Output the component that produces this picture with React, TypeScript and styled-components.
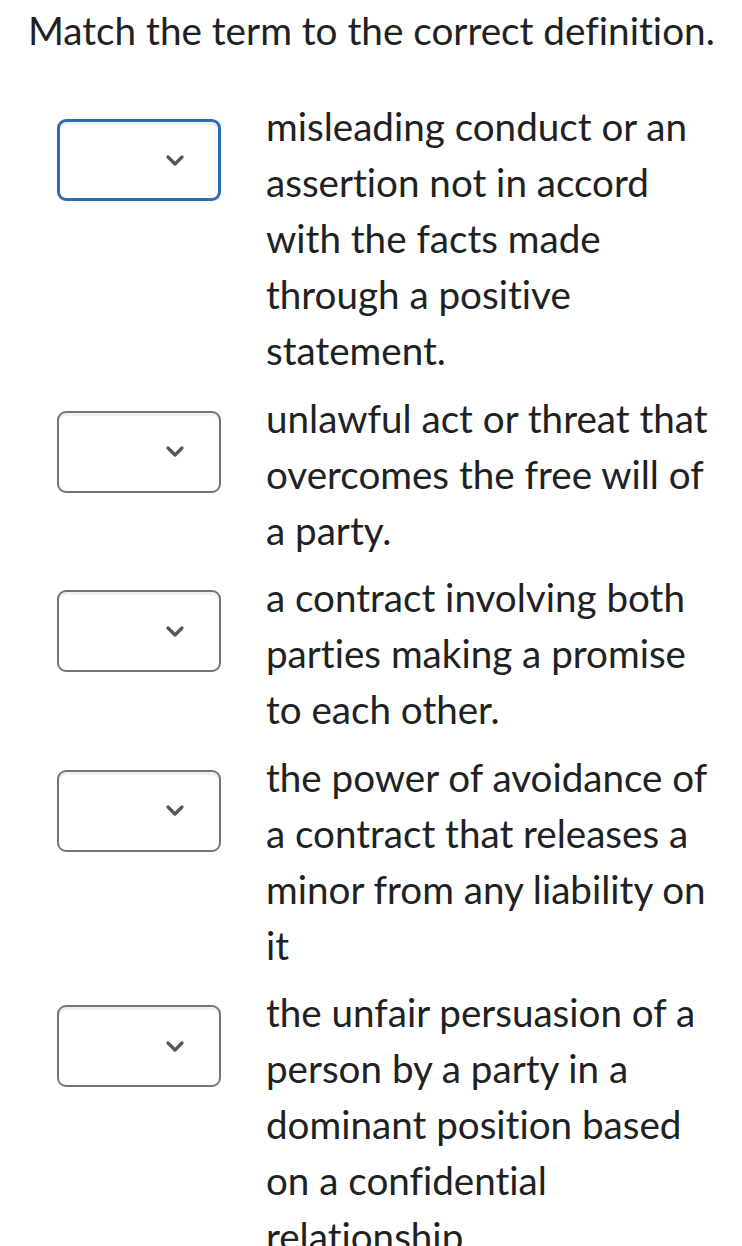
import React from 'react'
import styled, { createGlobalStyle } from 'styled-components'

const GlobalStyle = createGlobalStyle`
    html, body {
        margin: 0;
        padding: 0;
        background: #fff;
        overflow: hidden;
    }
    body {
        font-family: Lato, 'Noto Sans', sans-serif;
        color: #202122;
        font-variant-ligatures: none;
    }
`

const Page = styled.div`
    padding: 6px 0 0 28px;
`

const Title = styled.h1`
    margin: 0 0 44px 0;
    font-size: 38.7px;
    font-weight: 400;
    line-height: 48px;
    white-space: nowrap;
`

const List = styled.div`
    display: flex;
    flex-direction: column;
    gap: 11.5px;
`

const Row = styled.div`
    display: grid;
    grid-template-columns: 164px 1fr;
    column-gap: 45px;
    padding-left: 29px;
    align-items: start;
`

const Select = styled.div<{ $focused?: boolean }>`
    box-sizing: border-box;
    height: 82px;
    margin-top: 21px;
    border-radius: 9px;
    border: ${(p) => (p.$focused ? '3px solid #2f6cb8' : '2px solid #757575')};
    box-shadow: inset 0 3px 0 #eff0f3;
    display: flex;
    align-items: center;
    justify-content: flex-end;
    padding-right: ${(p) => (p.$focused ? '33px' : '34px')};
    color: #555;
`

const Definition = styled.div`
    font-size: 38.6px;
    line-height: 56px;
    width: 458px;
`

const Chevron = () => (
    <svg width="20" height="13" viewBox="0 0 20 13">
        <path d="M3 3 L10 10 L17 3" fill="none" stroke="currentColor" strokeWidth="3.2" strokeLinecap="round" strokeLinejoin="round" />
    </svg>
)

const items = [
    'misleading conduct or an assertion not in accord with the facts made through a positive statement.',
    'unlawful act or threat that overcomes the free will of a party.',
    'a contract involving both parties making a promise to each other.',
    'the power of avoidance of a contract that releases a minor from any liability on it',
    'the unfair persuasion of a person by a party in a dominant position based on a confidential relationship',
]

export default function App() {
    return (
        <Page>
            <GlobalStyle />
            <Title>Match the term to the correct definition.</Title>
            <List>
                {items.map((text, i) => (
                    <Row key={i}>
                        <Select $focused={i === 0}>
                            <Chevron />
                        </Select>
                        <Definition>{text}</Definition>
                    </Row>
                ))}
            </List>
        </Page>
    )
}
